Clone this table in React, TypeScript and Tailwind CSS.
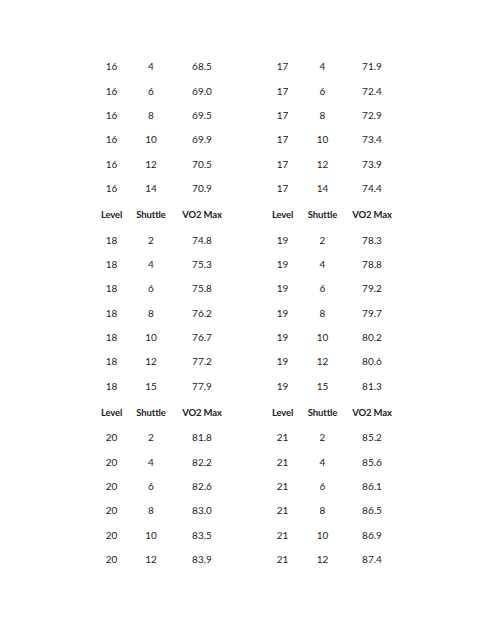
const sections = [
  {
    left: 16,
    right: 17,
    rows: [
      ["4", "68.5", "4", "71.9"],
      ["6", "69.0", "6", "72.4"],
      ["8", "69.5", "8", "72.9"],
      ["10", "69.9", "10", "73.4"],
      ["12", "70.5", "12", "73.9"],
      ["14", "70.9", "14", "74.4"],
    ],
  },
  {
    left: 18,
    right: 19,
    rows: [
      ["2", "74.8", "2", "78.3"],
      ["4", "75.3", "4", "78.8"],
      ["6", "75.8", "6", "79.2"],
      ["8", "76.2", "8", "79.7"],
      ["10", "76.7", "10", "80.2"],
      ["12", "77.2", "12", "80.6"],
      ["15", "77.9", "15", "81.3"],
    ],
  },
  {
    left: 20,
    right: 21,
    rows: [
      ["2", "81.8", "2", "85.2"],
      ["4", "82.2", "4", "85.6"],
      ["6", "82.6", "6", "86.1"],
      ["8", "83.0", "8", "86.5"],
      ["10", "83.5", "10", "86.9"],
      ["12", "83.9", "12", "87.4"],
    ],
  },
];

// fixed cell widths so the columns line up like the printed table
const Row = ({ cells, bold = false, extraTop = false }: { cells: string[]; bold?: boolean; extraTop?: boolean }) => (
  <div
    className={`flex items-center h-[24.4px] pl-[91.5px] ${extraTop ? "mt-[2.6px]" : ""} ${
      bold ? "font-bold text-[9.5px] tracking-[-0.15px]" : ""
    }`}
  >
    <div className="w-[40px] text-center">{cells[0]}</div>
    <div className="w-[39px] text-center">{cells[1]}</div>
    <div className="w-[63px] text-center">{cells[2]}</div>
    <div className="w-[29px]" />
    <div className="w-[40px] text-center">{cells[3]}</div>
    <div className="w-[40px] text-center">{cells[4]}</div>
    <div className="w-[59px] text-center">{cells[5]}</div>
  </div>
);

const header = ["Level", "Shuttle", "VO2 Max", "Level", "Shuttle", "VO2 Max"];

export default function App() {
  return (
    <div
      className="w-[495px] h-[640px] bg-white text-[#222] text-[10px] leading-none pt-[54px] overflow-hidden"
      style={{ fontFamily: "Lato, 'Open Sans', sans-serif" }}
    >
      {sections.map((s, i) => (
        <div key={s.left}>
          {i > 0 && <Row cells={header} bold extraTop />}
          {s.rows.map((r, j) => (
            <Row key={j} cells={[String(s.left), r[0], r[1], String(s.right), r[2], r[3]]} />
          ))}
        </div>
      ))}
    </div>
  );
}
